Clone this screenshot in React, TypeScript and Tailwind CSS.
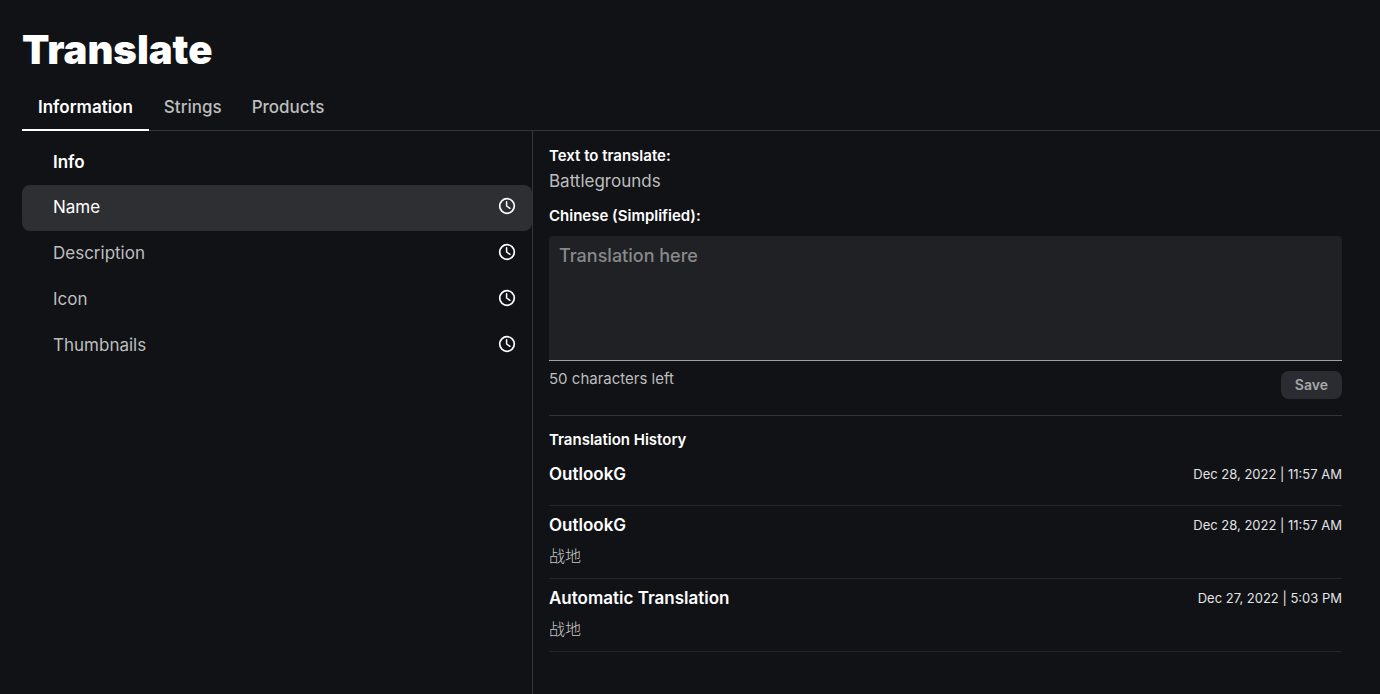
import { useState } from "react";

const tabs = ["Information", "Strings", "Products"];

const fields = ["Name", "Description", "Icon", "Thumbnails"];

const history = [
  { author: "OutlookG", date: "Dec 28, 2022 | 11:57 AM", text: "" },
  { author: "OutlookG", date: "Dec 28, 2022 | 11:57 AM", text: "战地" },
  { author: "Automatic Translation", date: "Dec 27, 2022 | 5:03 PM", text: "战地" },
];

const MAX_LENGTH = 50;

function ClockIcon() {
  return (
    <svg className="size-[18px]" viewBox="0 0 18 18" fill="none" stroke="currentColor" aria-hidden="true">
      <circle cx="9" cy="9" r="7.3" strokeWidth="1.7" />
      <path d="M8.6 4.8v4.2l3.3 2.3" strokeWidth="1.5" strokeLinecap="round" strokeLinejoin="round" />
    </svg>
  );
}

function Tabs({ active, onSelect }: { active: string; onSelect: (tab: string) => void }) {
  return (
    <div role="tablist" className="ml-[22px] flex h-12 border-b border-[#34353a]">
      {tabs.map((tab) => (
        <button
          key={tab}
          type="button"
          role="tab"
          aria-selected={tab === active}
          onClick={() => onSelect(tab)}
          className={
            tab === active
              ? "h-12 border-b-2 border-white px-4 pt-1 text-[17px] font-semibold text-white"
              : "h-12 border-b-2 border-transparent px-[15px] pt-1 text-[17px] font-medium text-[#bdbebe]"
          }
        >
          {tab}
        </button>
      ))}
    </div>
  );
}

function FieldList({ active, onSelect }: { active: string; onSelect: (field: string) => void }) {
  return (
    <nav aria-labelledby="info-heading" className="border-r border-[#34353a] pt-2 pl-[22px]">
      <h2 id="info-heading" className="px-[31px] text-[17px] leading-[46px] font-semibold">
        Info
      </h2>
      <ul>
        {fields.map((field) => (
          <li key={field}>
            <button
              type="button"
              onClick={() => onSelect(field)}
              className={
                field === active
                  ? "flex h-[46px] w-full items-center justify-between rounded-lg bg-[#2e2f33] pr-4 pl-[31px] text-[17px] text-white"
                  : "flex h-[46px] w-full items-center justify-between rounded-lg pr-4 pl-[31px] text-[17px] text-[#bdbebe]"
              }
            >
              {field}
              <span className="pb-1 text-white">
                <ClockIcon />
              </span>
            </button>
          </li>
        ))}
      </ul>
    </nav>
  );
}

export default function App() {
  const [tab, setTab] = useState("Information");
  const [field, setField] = useState("Name");
  const [value, setValue] = useState("");

  return (
    <div className="flex min-h-screen flex-col bg-[#111216] pt-[26px] font-['Inter','Noto_Sans_CJK_SC',sans-serif] text-white">
      <h1 className="px-[22px] text-[40px] leading-[48px] font-black">Translate</h1>
      <div className="mt-[9px]">
        <Tabs active={tab} onSelect={setTab} />
      </div>
      <div className="grid flex-1 grid-cols-[533fr_847fr]">
        <FieldList active={field} onSelect={setField} />
        <main className="pt-[15px] pr-[38px] pl-4">
          <h2 className="text-[15px] leading-5 font-semibold">Text to translate:</h2>
          <p className="mt-[3px] text-[17px] leading-6 text-[#bdbebe]">Battlegrounds</p>
          <label htmlFor="translation" className="mt-[13px] block text-[15px] leading-5 font-semibold">
            Chinese (Simplified):
          </label>
          <textarea
            id="translation"
            value={value}
            maxLength={MAX_LENGTH}
            onChange={(event) => setValue(event.target.value)}
            placeholder="Translation here"
            className="mt-2.5 block h-[125px] w-full resize-none rounded-t border-b border-[#a0a1a3] bg-[#202125] px-2.5 py-2 text-[18px] leading-6 font-medium outline-none placeholder:text-[#88898b]"
          />
          <div className="flex items-start justify-between border-b border-[#34353a] pb-4">
            <p className="pt-2 text-[15px] leading-5 text-[#bdbebe]">{MAX_LENGTH - value.length} characters left</p>
            <button
              type="button"
              className="mt-2.5 h-7 rounded-lg bg-[#2b2c31] px-3.5 text-sm font-semibold text-[#a5a6a8]"
            >
              Save
            </button>
          </div>
          <h2 className="mt-3.5 text-[15px] leading-5 font-semibold">Translation History</h2>
          <ul className="mt-[5px]">
            {history.map((entry, index) => (
              <li key={index} className="border-b border-[#25262a] pt-[7px] pb-[11px]">
                <div className="flex items-center justify-between">
                  <h3 className="text-[17px] leading-6 font-semibold">{entry.author}</h3>
                  <time className="text-[13px] leading-5 text-[#e2e3e4]">{entry.date}</time>
                </div>
                <p className="mt-2 text-base leading-[22px] font-light text-[#c8c9c9]">{entry.text}</p>
              </li>
            ))}
          </ul>
        </main>
      </div>
    </div>
  );
}
